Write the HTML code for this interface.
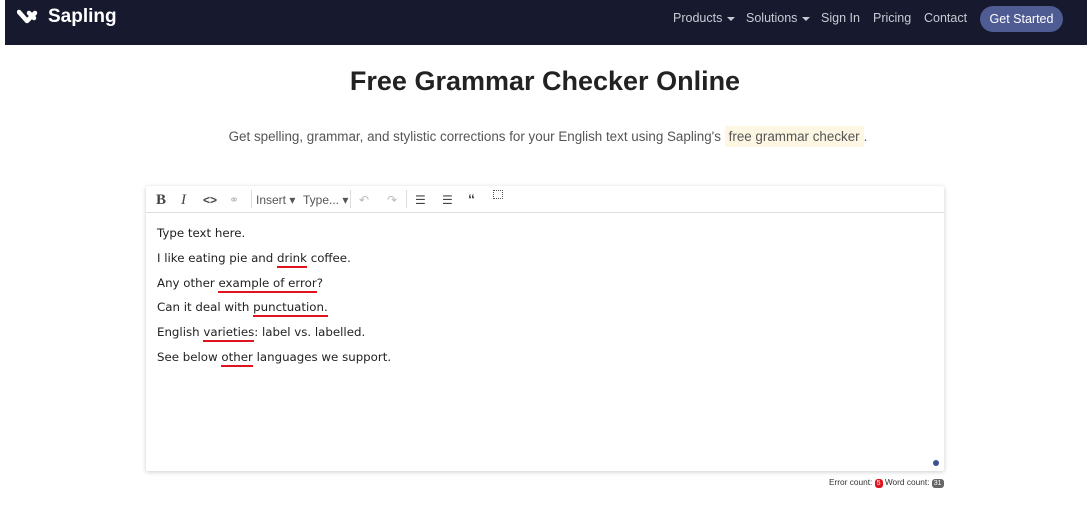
<!DOCTYPE html>
<html><head><meta charset="utf-8"><style>
*{margin:0;padding:0;box-sizing:border-box}
body{width:1092px;height:532px;background:#fff;font-family:"Liberation Sans",sans-serif;position:relative;overflow:hidden}
.nav{position:absolute;left:5px;top:0;width:1082px;height:45px;background:#171a2f}
.logo{position:absolute;left:12px;top:6px;color:#fff;font-size:19px;font-weight:bold;display:flex;align-items:center;gap:5px}
.nl{position:absolute;top:11px;font-size:12.5px;color:#c8cad3}
.car{display:inline-block;border-left:4px solid transparent;border-right:4px solid transparent;border-top:4px solid #c8cad3;vertical-align:middle;margin-left:5px}
.btn{position:absolute;left:975px;top:6px;width:83px;height:26px;border-radius:13px;background:#4f5b93;color:#fff;font-size:12.5px;text-align:center;line-height:26px}
h1{position:absolute;top:66px;width:1092px;text-align:center;font-size:27px;font-weight:bold;color:#222;left:-1px}
.sub{position:absolute;top:129px;width:1092px;text-align:center;font-size:13.4px;color:#555;left:2px}
.hl{background:#fdf6e3;padding:3px 4px;color:#555}
.ed{position:absolute;left:146px;top:186px;width:798px;height:285px;background:#fff;box-shadow:0 1px 5px rgba(0,0,0,.2);border-radius:2px}
.tb{height:27px;border-bottom:1px solid #ddd;position:relative;font-size:12px;color:#555}
.tb span{position:absolute;top:7px}
.sep{position:absolute;top:4px;width:1px;height:18px;background:#ddd}
.tx{position:absolute;left:11px;top:35px;font-family:"DejaVu Sans",sans-serif;font-size:11.8px;color:#222;line-height:24.8px}
.u{border-bottom:2px solid #e0141e;padding-bottom:1px}
.dot{position:absolute;right:5px;bottom:5px;width:6px;height:6px;border-radius:3px;background:#3a5293}
.cnt{position:absolute;left:829px;top:477px;font-size:8.3px;color:#333}
.b{display:inline-block;padding:0 2px;border-radius:3px;color:#fff;font-size:7px;line-height:9px}
</style></head><body>
<div class="nav">
<div class="logo"><svg width="26" height="16" viewBox="0 0 26 16"><path d="M2 3 L10 12 L18 4 M12 4 L17 9" stroke="#fff" stroke-width="4.5" fill="none" stroke-linecap="round" stroke-linejoin="round"/></svg>Sapling</div>
<div class="nl" style="left:668px">Products<i class="car"></i></div>
<div class="nl" style="left:741px">Solutions<i class="car"></i></div>
<div class="nl" style="left:816px">Sign In</div>
<div class="nl" style="left:868px">Pricing</div>
<div class="nl" style="left:919px">Contact</div>
<div class="btn">Get Started</div>
</div>
<h1>Free Grammar Checker Online</h1>
<div class="sub">Get spelling, grammar, and stylistic corrections for your English text using Sapling's <span class="hl">free grammar checker</span>.</div>
<div class="ed">
<div class="tb">
<span style="left:10px;top:6px;font-family:'Liberation Serif';font-weight:bold;font-size:15px;color:#444">B</span>
<span style="left:35px;top:6px;font-family:'Liberation Serif';font-style:italic;font-size:15px;color:#444">I</span>
<span style="left:57px;top:7px;font-size:12px;color:#444;font-weight:bold">&lt;&gt;</span>
<span style="left:83px;color:#bbb">⚭</span>
<div class="sep" style="left:105px"></div>
<span style="left:110px">Insert ▾</span>
<span style="left:157px">Type... ▾</span>
<div class="sep" style="left:204px"></div>
<span style="left:213px;color:#bbb">↶</span>
<span style="left:241px;color:#bbb">↷</span>
<div class="sep" style="left:260px"></div>
<span style="left:269px;color:#444">☰</span>
<span style="left:296px;color:#444">☰</span>
<span style="left:322px;color:#444;font-weight:bold;font-size:14px;top:5px">“</span>
<span style="left:347px;top:4px;width:10px;height:9px;border:1px dotted #555"></span>
</div>
<div class="tx">Type text here.<br>I like eating pie and <span class="u">drink</span> coffee.<br>Any other <span class="u">example of error</span>?<br>Can it deal with <span class="u">punctuation.</span><br>English <span class="u">varieties</span>: label vs. labelled.<br>See below <span class="u">other</span> languages we support.</div>
<div class="dot"></div>
</div>
<div class="cnt">Error count: <span class="b" style="background:#e0141e">5</span> Word count: <span class="b" style="background:#666">31</span></div>
</body></html>
